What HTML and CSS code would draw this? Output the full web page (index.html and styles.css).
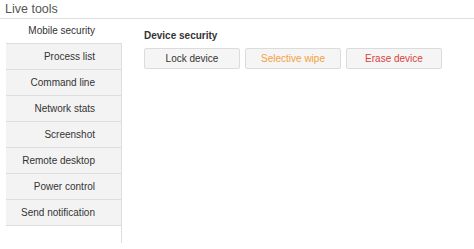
FILE: index.html
```html
<!DOCTYPE html>
<html lang="en">
<head>
  <meta charset="UTF-8" />
  <title>Live tools</title>
  <link rel="stylesheet" href="styles.css">
</head>
<body>
  <h1 class="page-title">Live tools</h1>
  <div class="tools-layout">
    <ul class="tool-tabs">
      <li class="active">Mobile security</li>
      <li>Process list</li>
      <li>Command line</li>
      <li>Network stats</li>
      <li>Screenshot</li>
      <li>Remote desktop</li>
      <li>Power control</li>
      <li>Send notification</li>
    </ul>
    <div class="tool-panel">
      <h2>Device security</h2>
      <div class="btn-row">
        <button class="btn">Lock device</button>
        <button class="btn btn-warn">Selective wipe</button>
        <button class="btn btn-danger">Erase device</button>
      </div>
    </div>
  </div>
</body>
</html>
```

FILE: styles.css
```css
body { margin: 0; font-family: 'Liberation Sans', Arial, sans-serif; color: #333; background: #fff; }
.page-title { margin: 0; padding-left: 5px; font-size: 12.5px; font-weight: normal; line-height: 18px; color: #555; border-bottom: 1px solid #ddd; }
.tools-layout { display: flex; margin-left: 6px; }
.tool-tabs { list-style: none; margin: 0; padding: 0; width: 115px; height: 224px; border-right: 1px solid #ddd; }
.tool-tabs li { height: 25px; line-height: 25px; font-size: 10px; text-align: right; padding-right: 26px; background: #f3f3f3; border-bottom: 1px solid #ddd; color: #333; }
.tool-tabs li.active { background: #fff; margin-right: -1px; padding-right: 27px; height: 24px; line-height: 24px; }
.tool-panel { padding: 10px 0 0 22px; }
.tool-panel h2 { margin: 0 0 5px; font-size: 10px; line-height: 14px; font-weight: bold; color: #333; }
.btn-row { display: flex; gap: 5px; }
.btn { width: 96px; height: 21px; padding: 0; font-family: inherit; font-size: 10px; color: #333; background: #f5f5f5; border: 1px solid #dcdcdc; border-radius: 2px; }
.btn-warn { color: #f3a13c; }
.btn-danger { color: #d9423d; }
```
